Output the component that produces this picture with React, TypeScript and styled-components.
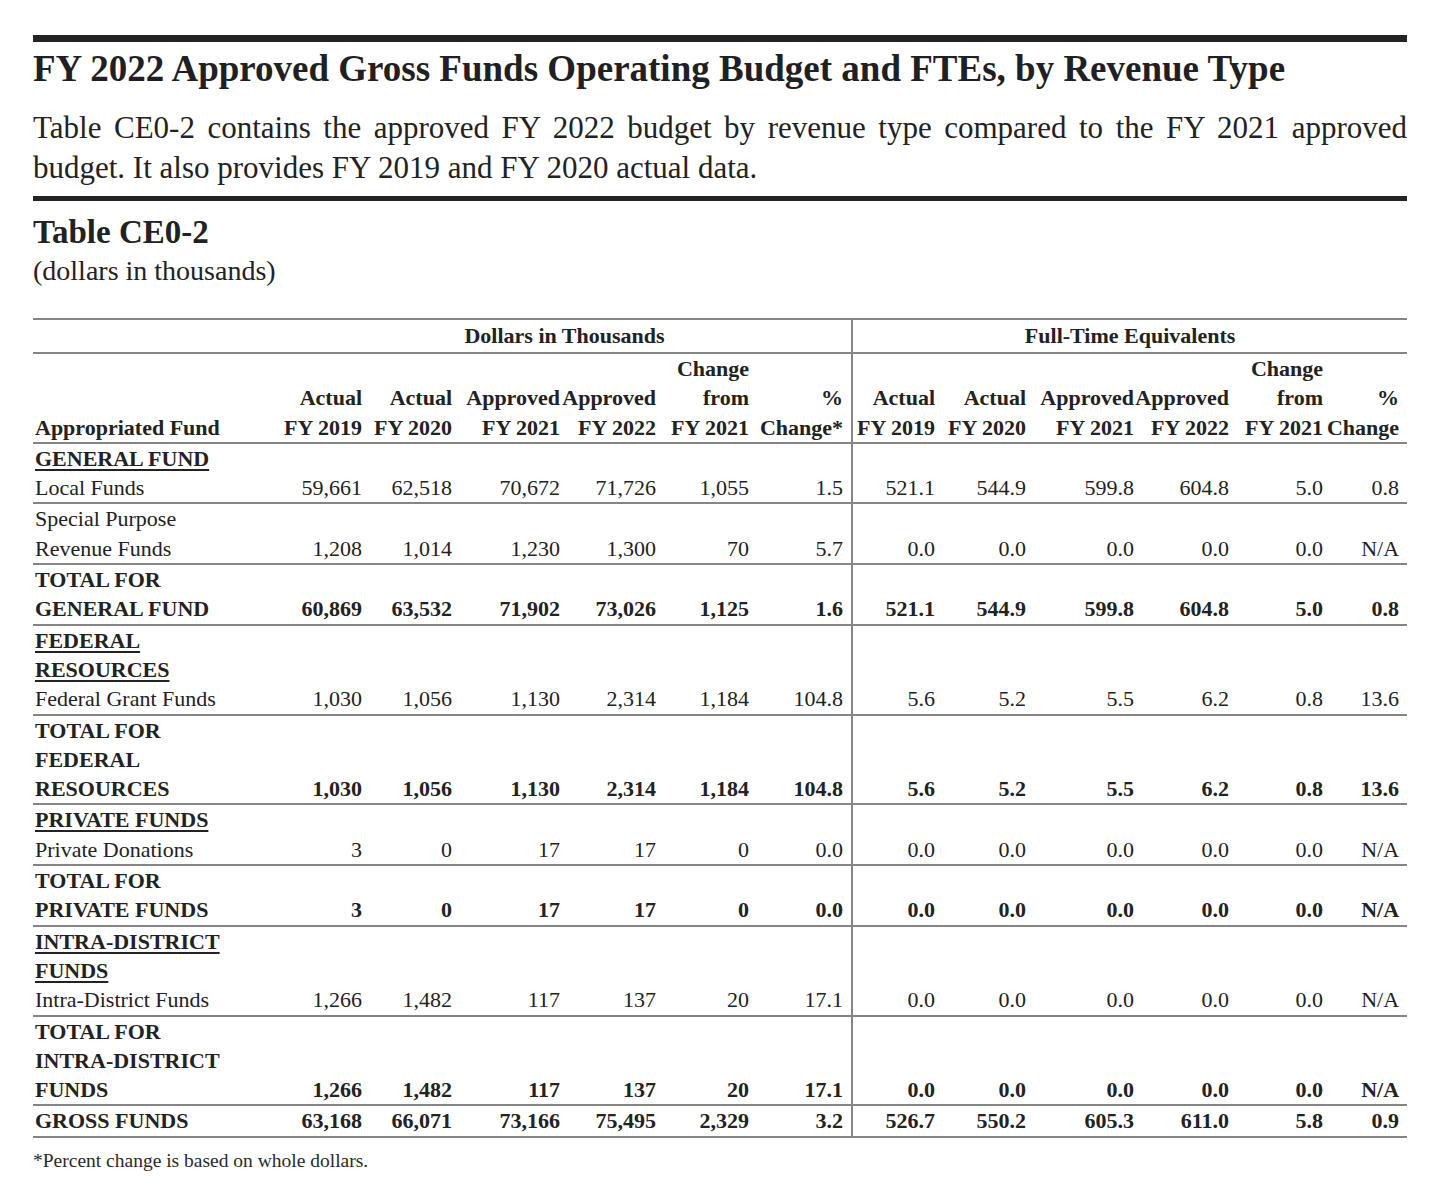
import React from 'react';
import styled, { createGlobalStyle, css } from 'styled-components';

const GlobalStyle = createGlobalStyle`
  body {
    margin: 0;
    background: #fff;
    color: #222;
    font-family: 'Liberation Serif', 'Times New Roman', serif;
  }
`;

const Page = styled.div`
  width: 1374px;
  padding: 35px 33px 0 33px;
`;

const Rule = styled.div<{ $h: number }>`
  height: ${p => p.$h}px;
  background: #232326;
`;

const Title = styled.h1`
  margin: 5px 0 0;
  font-size: 37px;
  line-height: 44px;
  font-weight: bold;
  color: #1f1f24;
  white-space: nowrap;
`;

const Intro = styled.p`
  margin: 17px 0 8px;
  font-size: 31px;
  line-height: 40px;
  text-align: justify;
  color: #222;
`;

const Caption = styled.div`
  margin-top: 11px;
  font-size: 33px;
  line-height: 40px;
  font-weight: bold;
`;

const Sub = styled.div`
  margin-top: 3px;
  font-size: 28px;
  line-height: 32px;
`;

const Table = styled.table`
  margin-top: 31px;
  width: 1374px;
  table-layout: fixed;
  border-collapse: collapse;
  font-size: 22px;
  color: #222;
  border-top: 2px solid #858585;
`;

const LINE = 29.3;

const Cell = styled.td<{ $bold?: boolean; $split?: boolean; $line?: boolean }>`
  padding: 0 8px 0 0;
  text-align: right;
  vertical-align: bottom;
  line-height: ${LINE}px;
  white-space: nowrap;
  font-weight: ${p => (p.$bold ? 'bold' : 'normal')};
  ${p => p.$split && css`border-left: 2px solid #858585;`}
  ${p => p.$line && css`border-bottom: 2px solid #858585;`}
`;

const LabelCell = styled(Cell)`
  padding: 0 0 0 2px;
  text-align: left;
`;

const GroupHead = styled.th<{ $split?: boolean }>`
  height: 32px;
  padding: 0;
  font-size: 22px;
  font-weight: bold;
  text-align: center;
  vertical-align: middle;
  border-bottom: 2px solid #858585;
  ${p => p.$split && css`border-left: 2px solid #858585;`}
`;

const HeadCell = styled.th<{ $split?: boolean; $left?: boolean }>`
  padding: ${p => (p.$left ? '0 0 0 2px' : '0 8px 0 0')};
  vertical-align: bottom;
  font-weight: bold;
  line-height: ${LINE}px;
  white-space: nowrap;
  border-bottom: 2px solid #858585;
  ${p => p.$split && css`border-left: 2px solid #858585;`}
`;

const HeadStack = styled.div<{ $left?: boolean }>`
  display: flex;
  flex-direction: column;
  align-items: ${p => (p.$left ? 'flex-start' : 'flex-end')};
`;

const Section = styled.span`
  font-weight: bold;
  text-decoration: underline;
  text-decoration-thickness: 2px;
  text-underline-offset: 3px;
`;

const Note = styled.div`
  margin-top: 11px;
  font-size: 19.5px;
  line-height: 24px;
  color: #2a2a2a;
`;

const widths = [245, 92, 90, 108, 96, 93, 95, 91, 91, 108, 95, 94, 76];

const headers: string[][] = [
  ['Actual', 'FY 2019'],
  ['Actual', 'FY 2020'],
  ['Approved', 'FY 2021'],
  ['Approved', 'FY 2022'],
  ['Change', 'from', 'FY 2021'],
  ['%', 'Change*'],
  ['Actual', 'FY 2019'],
  ['Actual', 'FY 2020'],
  ['Approved', 'FY 2021'],
  ['Approved', 'FY 2022'],
  ['Change', 'from', 'FY 2021'],
  ['%', 'Change'],
];

type Row = {
  kind: 'section' | 'item' | 'total';
  label: string[];
  values?: string[];
};

const zeros = ['0.0', '0.0', '0.0', '0.0', '0.0', 'N/A'];

const rows: Row[] = [
  { kind: 'section', label: ['GENERAL FUND'] },
  {
    kind: 'item',
    label: ['Local Funds'],
    values: ['59,661', '62,518', '70,672', '71,726', '1,055', '1.5', '521.1', '544.9', '599.8', '604.8', '5.0', '0.8'],
  },
  {
    kind: 'item',
    label: ['Special Purpose', 'Revenue Funds'],
    values: ['1,208', '1,014', '1,230', '1,300', '70', '5.7', ...zeros],
  },
  {
    kind: 'total',
    label: ['TOTAL FOR', 'GENERAL FUND'],
    values: ['60,869', '63,532', '71,902', '73,026', '1,125', '1.6', '521.1', '544.9', '599.8', '604.8', '5.0', '0.8'],
  },
  { kind: 'section', label: ['FEDERAL', 'RESOURCES'] },
  {
    kind: 'item',
    label: ['Federal Grant Funds'],
    values: ['1,030', '1,056', '1,130', '2,314', '1,184', '104.8', '5.6', '5.2', '5.5', '6.2', '0.8', '13.6'],
  },
  {
    kind: 'total',
    label: ['TOTAL FOR', 'FEDERAL', 'RESOURCES'],
    values: ['1,030', '1,056', '1,130', '2,314', '1,184', '104.8', '5.6', '5.2', '5.5', '6.2', '0.8', '13.6'],
  },
  { kind: 'section', label: ['PRIVATE FUNDS'] },
  {
    kind: 'item',
    label: ['Private Donations'],
    values: ['3', '0', '17', '17', '0', '0.0', ...zeros],
  },
  {
    kind: 'total',
    label: ['TOTAL FOR', 'PRIVATE FUNDS'],
    values: ['3', '0', '17', '17', '0', '0.0', ...zeros],
  },
  { kind: 'section', label: ['INTRA-DISTRICT', 'FUNDS'] },
  {
    kind: 'item',
    label: ['Intra-District Funds'],
    values: ['1,266', '1,482', '117', '137', '20', '17.1', ...zeros],
  },
  {
    kind: 'total',
    label: ['TOTAL FOR', 'INTRA-DISTRICT', 'FUNDS'],
    values: ['1,266', '1,482', '117', '137', '20', '17.1', ...zeros],
  },
  {
    kind: 'total',
    label: ['GROSS FUNDS'],
    values: ['63,168', '66,071', '73,166', '75,495', '2,329', '3.2', '526.7', '550.2', '605.3', '611.0', '5.8', '0.9'],
  },
];

const Lines: React.FC<{ lines: string[] }> = ({ lines }) => (
  <>
    {lines.map((l, i) => (
      <React.Fragment key={i}>
        {i > 0 && <br />}
        {l}
      </React.Fragment>
    ))}
  </>
);

const BudgetRow: React.FC<{ row: Row }> = ({ row }) => {
  const bold = row.kind === 'total';
  const line = row.kind !== 'section';
  const cells = row.values ?? Array(12).fill('');

  return (
    <tr>
      <LabelCell $bold={bold} $line={line}>
        {row.kind === 'section' ? (
          <Section>
            <Lines lines={row.label} />
          </Section>
        ) : (
          <Lines lines={row.label} />
        )}
      </LabelCell>
      {cells.map((v, i) => (
        <Cell key={i} $bold={bold} $line={line} $split={i === 6}>
          {v}
        </Cell>
      ))}
    </tr>
  );
};

export default function App() {
  return (
    <>
      <GlobalStyle />
      <Page>
        <Rule $h={7} />
        <Title>FY 2022 Approved Gross Funds Operating Budget and FTEs, by Revenue Type</Title>
        <Intro>
          Table CE0-2 contains the approved FY 2022 budget by revenue type compared to the FY 2021 approved
          budget. It also provides FY 2019 and FY 2020 actual data.
        </Intro>
        <Rule $h={5} />
        <Caption>Table CE0-2</Caption>
        <Sub>(dollars in thousands)</Sub>

        <Table>
          <colgroup>
            {widths.map((w, i) => (
              <col key={i} style={{ width: w }} />
            ))}
          </colgroup>
          <thead>
            <tr>
              <GroupHead />
              <GroupHead colSpan={6}>Dollars in Thousands</GroupHead>
              <GroupHead colSpan={6} $split>
                Full-Time Equivalents
              </GroupHead>
            </tr>
            <tr>
              <HeadCell $left>
                <HeadStack $left>
                  <span>Appropriated Fund</span>
                </HeadStack>
              </HeadCell>
              {headers.map((h, i) => (
                <HeadCell key={i} $split={i === 6}>
                  <HeadStack>
                    {h.map(t => (
                      <span key={t}>{t}</span>
                    ))}
                  </HeadStack>
                </HeadCell>
              ))}
            </tr>
          </thead>
          <tbody>
            {rows.map((r, i) => (
              <BudgetRow key={i} row={r} />
            ))}
          </tbody>
        </Table>

        <Note>*Percent change is based on whole dollars.</Note>
      </Page>
    </>
  );
}
